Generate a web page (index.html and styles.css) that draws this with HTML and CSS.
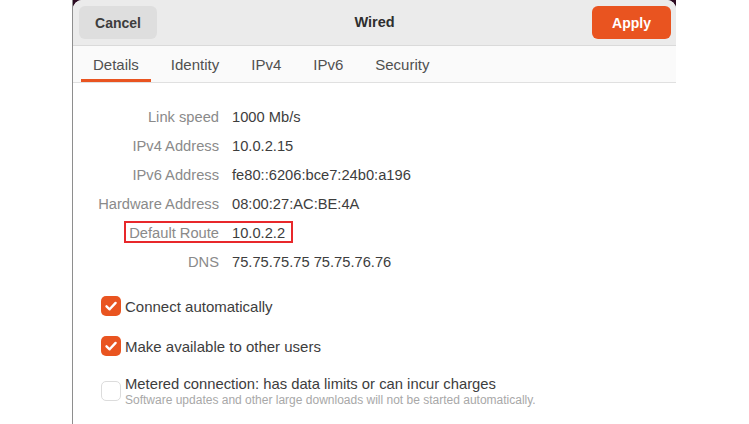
FILE: index.html
```html
<!DOCTYPE html>
<html>
<head>
<meta charset="utf-8">
<link rel="stylesheet" href="styles.css">
</head>
<body>
<div class="stage">
  <div class="frame">
    <div class="window">
      <header class="headerbar">
        <button class="btn btn-cancel">Cancel</button>
        <div class="title">Wired</div>
        <button class="btn btn-apply">Apply</button>
      </header>
      <nav class="tabs">
        <div class="tab active">Details</div>
        <div class="tab">Identity</div>
        <div class="tab">IPv4</div>
        <div class="tab">IPv6</div>
        <div class="tab">Security</div>
      </nav>
      <main class="content">
        <div class="details">
          <div class="row"><span class="label">Link speed</span><span class="value">1000 Mb/s</span></div>
          <div class="row"><span class="label">IPv4 Address</span><span class="value">10.0.2.15</span></div>
          <div class="row"><span class="label">IPv6 Address</span><span class="value">fe80::6206:bce7:24b0:a196</span></div>
          <div class="row"><span class="label">Hardware Address</span><span class="value">08:00:27:AC:BE:4A</span></div>
          <div class="row highlight"><span class="label">Default Route</span><span class="value">10.0.2.2</span></div>
          <div class="row"><span class="label">DNS</span><span class="value">75.75.75.75 75.75.76.76</span></div>
        </div>
        <div class="checks">
          <div class="check">
            <span class="box checked"><svg viewBox="0 0 20 20" width="20" height="20"><path d="M5.5 10.3 L8.6 13.3 L14.6 6.9" fill="none" stroke="#fff" stroke-width="2.4" stroke-linecap="round" stroke-linejoin="round"/></svg></span>
            <span class="check-label">Connect automatically</span>
          </div>
          <div class="check">
            <span class="box checked"><svg viewBox="0 0 20 20" width="20" height="20"><path d="M5.5 10.3 L8.6 13.3 L14.6 6.9" fill="none" stroke="#fff" stroke-width="2.4" stroke-linecap="round" stroke-linejoin="round"/></svg></span>
            <span class="check-label">Make available to other users</span>
          </div>
          <div class="check metered">
            <span class="box"></span>
            <span class="check-text">
              <span class="check-label">Metered connection: has data limits or can incur charges</span>
              <span class="check-sub">Software updates and other large downloads will not be started automatically.</span>
            </span>
          </div>
        </div>
      </main>
    </div>
  </div>
</div>
</body>
</html>
```

FILE: styles.css
```css
html, body {
  margin: 0;
  padding: 0;
  background: #ffffff;
}
body {
  width: 749px;
  height: 424px;
  overflow: hidden;
  font-family: "Liberation Sans", Arial, sans-serif;
}
.stage {
  display: flex;
  height: 424px;
  padding-left: 72px;
}
.frame {
  width: 604px;
  height: 424px;
  background: #2c0b22;
  border-left: 1px solid #8e8e8e;
  box-sizing: border-box;
  display: flex;
}
.window {
  flex: 1;
  background: #ffffff;
  border-radius: 9px 9px 0 0;
  overflow: hidden;
  display: flex;
  flex-direction: column;
}
.headerbar {
  box-sizing: border-box;
  background: #ebebeb;
  border-bottom: 1px solid #dadada;
  display: flex;
  align-items: flex-start;
  justify-content: space-between;
  padding: 6px 5px 0 6px;
  height: 46px;
}
.btn {
  border: none;
  font-family: "Liberation Sans", Arial, sans-serif;
  font-weight: bold;
  font-size: 14px;
  height: 33px;
  border-radius: 6px;
  padding: 0;
}
.btn-cancel {
  width: 78px;
  background: #dedede;
  color: #3d3d3d;
}
.btn-apply {
  width: 79px;
  background: #e95420;
  color: #ffffff;
}
.title {
  font-weight: bold;
  font-size: 14.5px;
  color: #2e2e2e;
  line-height: 33px;
}
.tabs {
  height: 37px;
  box-sizing: border-box;
  background: #fafafa;
  border-bottom: 1px solid #e0e0e0;
  display: flex;
  gap: 8px;
  padding-left: 8px;
}
.tab {
  padding: 4px 12px 0;
  font-size: 15px;
  color: #505050;
  height: 36px;
  box-sizing: border-box;
  border-bottom: 3px solid transparent;
  display: flex;
  align-items: center;
}
.tab.active {
  border-bottom-color: #e95420;
}
.content {
  padding-top: 19px;
}
.details {
  display: flex;
  flex-direction: column;
}
.row {
  display: flex;
  height: 29px;
  align-items: center;
  font-size: 14.7px;
  gap: 13px;
}
.label {
  width: 146px;
  text-align: right;
  color: #8a8a8a;
}
.value {
  color: #3d3d3d;
}
.row.highlight {
  position: relative;
}
.row.highlight::after {
  content: "";
  position: absolute;
  left: 51px;
  top: 3px;
  width: 169px;
  height: 22px;
  border: 2px solid #e8282b;
  box-sizing: border-box;
}
.checks {
  padding-left: 28px;
  padding-top: 20px;
  display: flex;
  flex-direction: column;
  gap: 20px;
}
.check {
  display: flex;
  align-items: center;
  gap: 4px;
  height: 20px;
}
.box {
  width: 20px;
  height: 20px;
  border-radius: 5px;
  box-sizing: border-box;
  flex: none;
  display: flex;
}
.box.checked {
  background: #e95420;
}
.metered .box {
  border: 1.5px solid #dcdcdc;
  background: #ffffff;
  margin-top: 5px;
}
.check-label {
  font-size: 15px;
  color: #3d3d3d;
}
.metered {
  align-items: flex-start;
  height: auto;
}
.check-text {
  display: flex;
  flex-direction: column;
}
.metered .check-label {
  font-size: 14.8px;
  line-height: 17px;
}
.check-sub {
  font-size: 12px;
  color: #a8a8a8;
  line-height: 14px;
}
```
